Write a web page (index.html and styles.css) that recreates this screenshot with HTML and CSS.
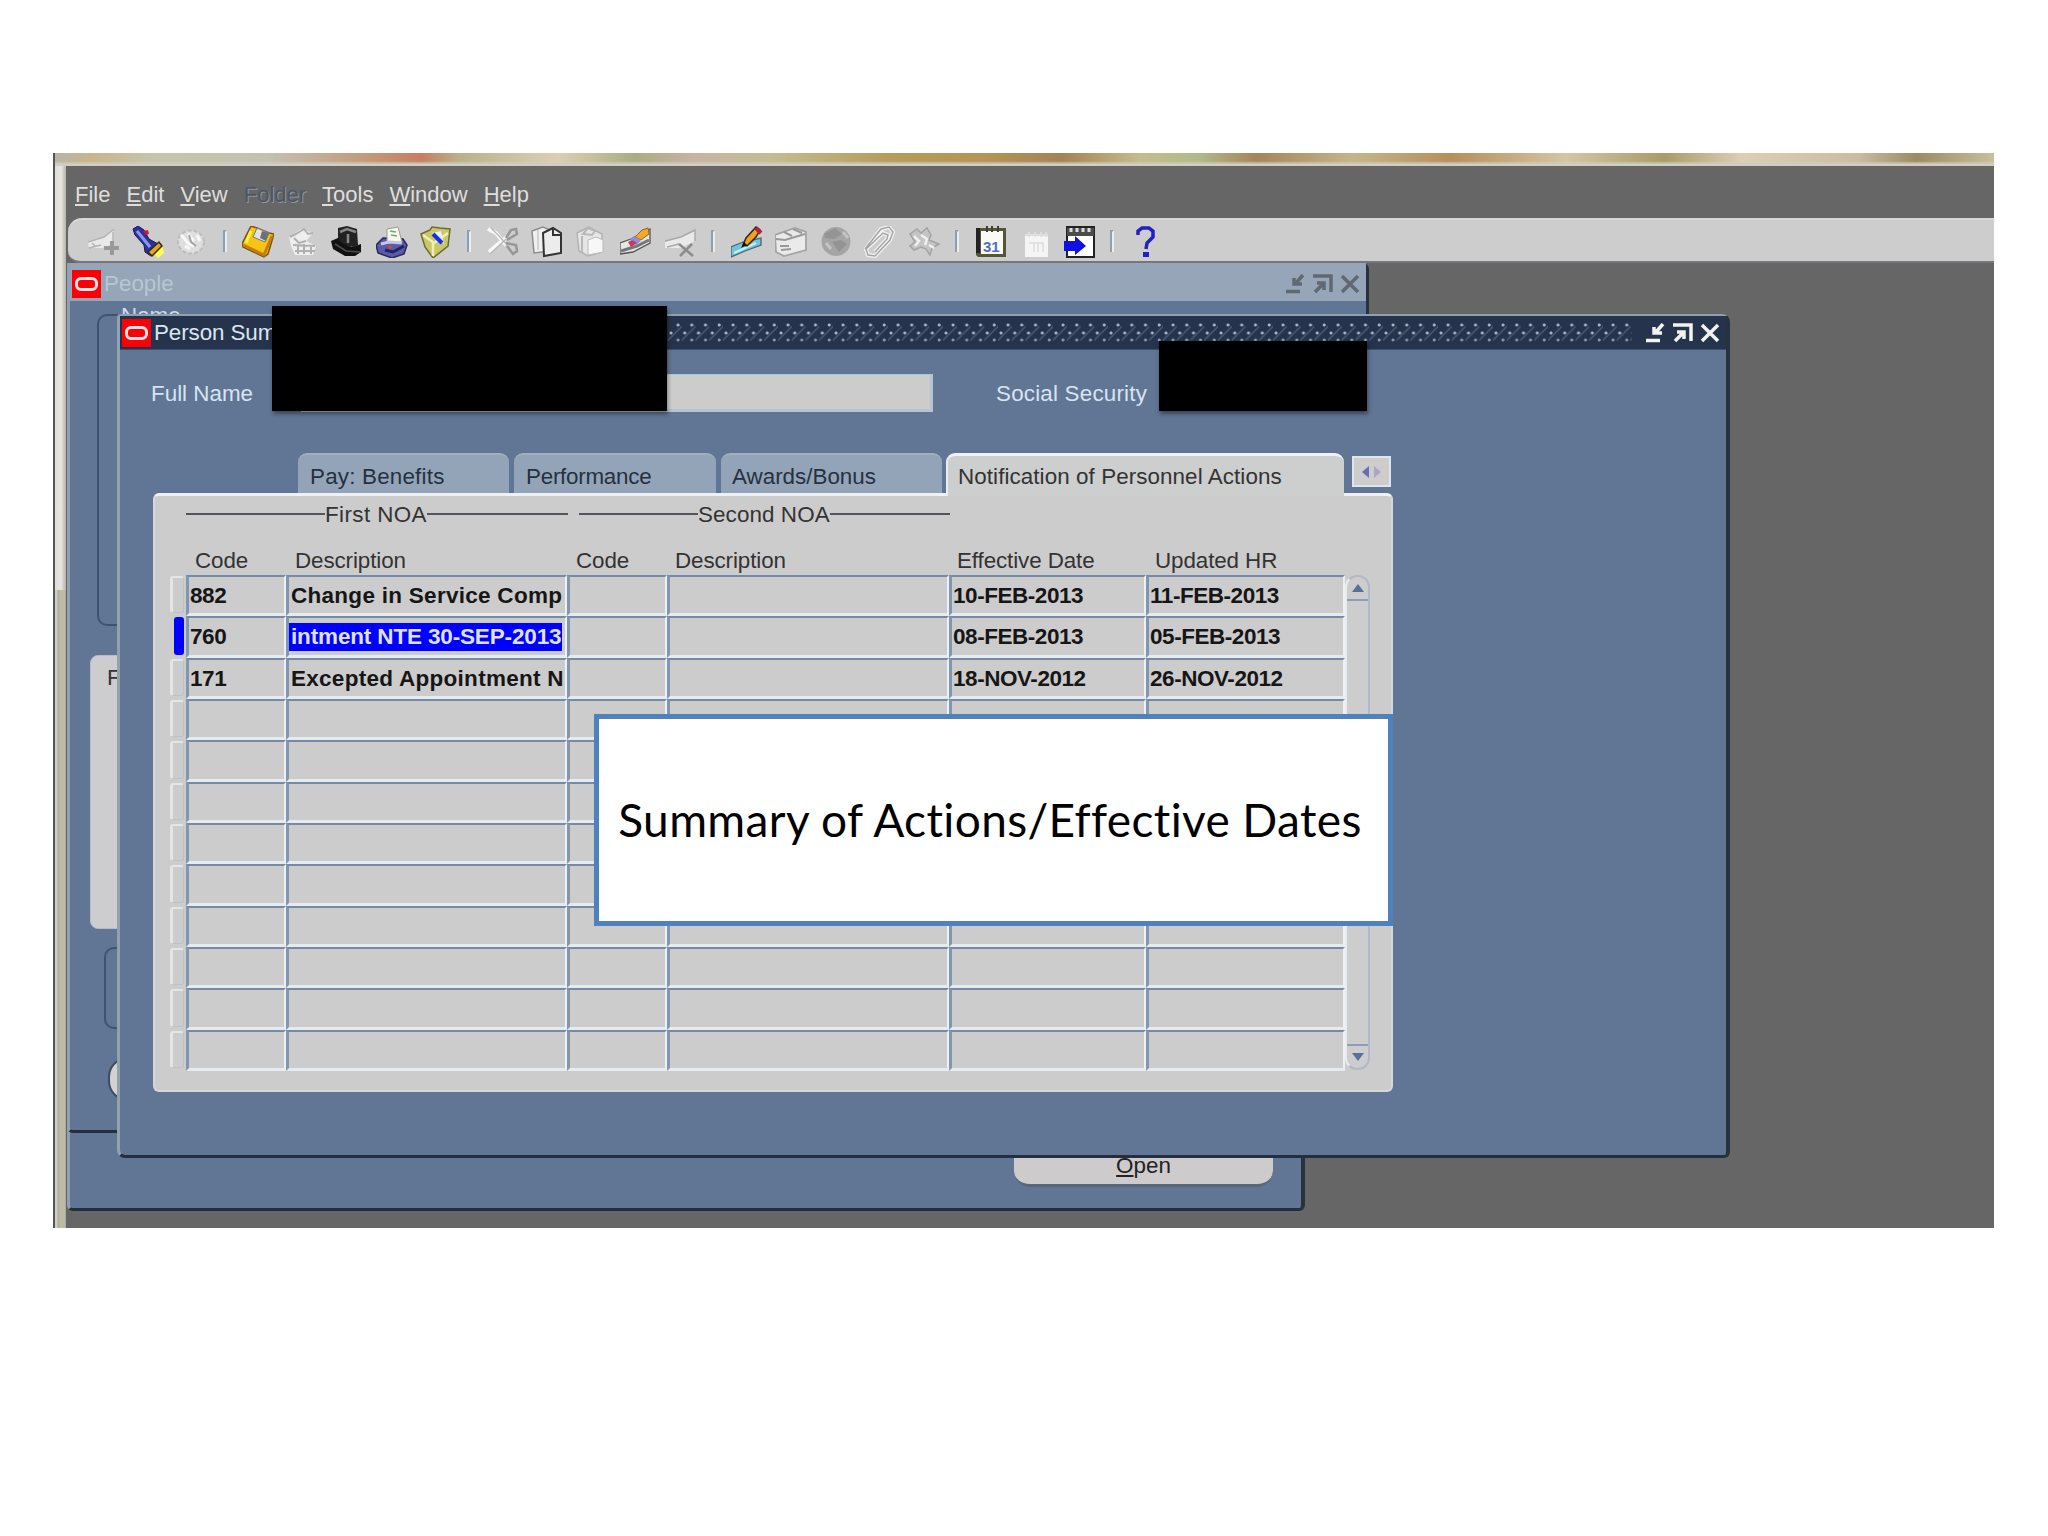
FILE: index.html
```html
<!DOCTYPE html>
<html lang="en">
<head>
    <meta charset="UTF-8">
    <meta name="viewport" content="width=device-width, initial-scale=1.0">
    <title>Person Summary</title>
    <link rel="stylesheet" href="styles.css">
</head>
<body>
    <div class="screen">
      <div class="app">
        <nav class="menubar">
          <span><u>F</u>ile</span>
          <span><u>E</u>dit</span>
          <span><u>V</u>iew</span>
          <span class="disabled">Folder</span>
          <span><u>T</u>ools</span>
          <span><u>W</u>indow</span>
          <span><u>H</u>elp</span>
        </nav>

        <div class="toolbar">
          <!-- new -->
          <svg viewBox="0 0 32 32"><path d="M1 16l5-2 10-3 9-6 2 1v12l-12 4H2z" fill="#e9e9e9"/><path d="M1 16l16-5 10-8M2 22l12-3M5 17l4 4M26 6v9" stroke="#b4b4b4" stroke-width="1.5" fill="none"/><path d="M17 22h15M25 15v14" stroke="#999" stroke-width="4"/></svg>
          <!-- find -->
          <svg viewBox="0 0 32 32"><path d="M21 27l9-8 2 8-6 5z" fill="#ffff55"/><path d="M1 3l5-3 6 4 5 9 9 5 2 4-9 8-6-4-1-7-9-10z" fill="#2c3299" stroke="#111a55"/><path d="M5 5l13 16" stroke="#8d95e8" stroke-width="3"/><path d="M16 26l11-10 3 4-10 10z" fill="#e8a31b" stroke="#2a2a22" stroke-width="1.5"/><path d="M11 5l5-1 1 4-3 1z" fill="#d4182c"/></svg>
          <!-- show navigator -->
          <svg viewBox="0 0 32 32"><ellipse cx="15" cy="16" rx="13" ry="11.500" fill="#dedede" stroke="#bcbcbc" stroke-width="2" stroke-dasharray="4 2"/><path d="M5 9l8 9 5 2M12 8l6 7M9 20l5 3M21 9l3 6" stroke="#f8f8f8" stroke-width="3" fill="none"/><path d="M13 9l2 7 5 4" stroke="#a4a4a4" stroke-width="2" fill="none"/></svg>
          <i class="sep"></i>
          <!-- save -->
          <svg viewBox="0 0 32 32"><path d="M9 0l6 2 12 5 5 1-6 20-4 3L1 21l-1-3z" fill="#f6c414" stroke="#6f5510" stroke-width="1.500"/><path d="M1 19l21 10 8-19" stroke="#c77c08" stroke-width="3" fill="none"/><path d="M15 2l12 5-4 9-12-5z" fill="#e2e2e2" stroke="#777"/><path d="M20 5l7 2-3 8-6-3z" fill="#69707e"/><path d="M9 5L4 17" stroke="#fff04c" stroke-width="3"/></svg>
          <!-- next step -->
          <svg viewBox="0 0 32 32"><path d="M2 11L14 3l12 4-7 8 10 5-3 9H8l-4-9z" fill="#eee"/><path d="M3 11l6-3 8-5 4 5 5-1M7 12l5 5 7-2M6 19l22 1M8 25h20M11 19v9M17 18v10M24 19v9" stroke="#b0b0b0" stroke-width="2" fill="none"/></svg>
          <!-- switch responsibility -->
          <svg viewBox="0 0 32 32"><path d="M7 2l9-2 10 3 1 16-5 2-11-3-4-5z" fill="#222"/><path d="M0 15l7-3 4 5 10 4 9-3v8l-6 4H14L2 23z" fill="#111"/><path d="M9 6l7-3 9 3M17 8v9" stroke="#888" stroke-width="2.500" fill="none"/><path d="M4 18l11 7 14 1" stroke="#4d4d4d" stroke-width="1.500" fill="none"/></svg>
          <!-- print -->
          <svg viewBox="0 0 32 32"><path d="M0 19l7-7 20 1 4 6-3 9-12 4L2 27z" fill="#5a5aa5" stroke="#28285c" stroke-width="1.500"/><path d="M11 3l11-2 4 15-15 1z" fill="#f6f6ef" stroke="#9b9b8c"/><path d="M5 18l8-2 13 1" stroke="#c4c4ee" stroke-width="3" fill="none"/><path d="M9 24l8 2 11-6" stroke="#222266" stroke-width="3" fill="none"/><circle cx="14" cy="21" r="1.800" fill="#d64545"/><path d="M14 5l6 1M15 9l6 1" stroke="#7aa56a" stroke-width="1.500"/></svg>
          <!-- close form -->
          <svg viewBox="0 0 32 32"><path d="M1 8l9-4 2-3 8 1 10 1-2 17-15 12L5 21z" fill="#c8c869" stroke="#6c6c2e" stroke-width="1.500"/><path d="M3 9l11 8 14-10M13 17v13" stroke="#efefb5" stroke-width="2.500" fill="none"/><path d="M12 7l9-2 3 13-8-6z" fill="#e8efff"/><path d="M13 8l9 9" stroke="#1c2ce0" stroke-width="4"/></svg>
          <i class="sep"></i>
          <!-- cut -->
          <svg viewBox="0 0 32 32"><path d="M1 3l8 4 10 12M2 26l8-7 10-8" stroke="#f7f7f7" stroke-width="4" fill="none"/><path d="M4 2l9 9 8 9M3 28l16-15" stroke="#b5b5b5" stroke-width="1.200" fill="none"/><path d="M19 12l5-8 5-1 1 5-10 6M19 17l10 2 1 6-4 3-6-8" stroke="#969696" stroke-width="2.500" fill="none"/></svg>
          <!-- copy -->
          <svg viewBox="0 0 32 32"><path d="M1 5l11-4 7 3v21L3 27z" fill="#f0f0f0" stroke="#8d8d8d" stroke-width="1.500"/><path d="M12 7l10-5 8 5v20l-17 3z" fill="#ececec" stroke="#333" stroke-width="2"/><path d="M22 3v6h7" stroke="#333" stroke-width="2" fill="none"/><path d="M7 4v20" stroke="#b5b5b5"/></svg>
          <!-- paste -->
          <svg viewBox="0 0 32 32"><path d="M1 7l8-4 4-2 7 4 6 3v18l-14 4-9-5z" fill="#e5e5e5" stroke="#b3b3b3" stroke-width="1.500"/><path d="M12 14l8-3 7 3v12l-15 3z" fill="#f7f7f7" stroke="#bbb"/><path d="M7 8l5-6 7 3-3 4zM6 10v16" stroke="#b8b8b8" stroke-width="2" fill="none"/></svg>
          <!-- clear record -->
          <svg viewBox="0 0 32 32"><path d="M0 17l11-4 19-10v14L13 26l-13 2z" fill="#e6e6e6" stroke="#555" stroke-width="1.300"/><path d="M1 25l16-5 12-6" stroke="#777" stroke-width="3" fill="none"/><path d="M15 11l7-7 6-2 1 6-8 6z" fill="#f0a928" stroke="#93621d"/><path d="M10 13l4-3 7 5-5 4z" fill="#8d8ddd"/><path d="M8 16l4-2 5 3-6 4z" fill="#c43c5c"/></svg>
          <!-- delete -->
          <svg viewBox="0 0 32 32"><path d="M0 16l14-4L30 5v10l-14 7H0z" fill="#e9e9e9"/><path d="M0 15l16-4 14-7v11M2 21l12-3" stroke="#aaa" stroke-width="1.500" fill="none"/><path d="M14 18l14 12M27 18L15 30" stroke="#8c8c8c" stroke-width="2.500"/></svg>
          <i class="sep"></i>
          <!-- edit field -->
          <svg viewBox="0 0 32 32"><path d="M0 21l12-5 18-4v7l-16 6-14 6z" fill="#72c5d8" stroke="#4b6670" stroke-width="1.300"/><path d="M3 27l22-10" stroke="#c7eff5" stroke-width="2"/><path d="M12 19l3-7L25 1l4 3-4 7-9 9z" fill="#f0a01c" stroke="#332615" stroke-width="1.500"/><path d="M25 2l5 5" stroke="#ad2339" stroke-width="4"/><path d="M10 22l3-6 3 3z" fill="#111"/></svg>
          <!-- zoom -->
          <svg viewBox="0 0 32 32"><path d="M0 9l20-7 11 4v18l-22 6-8-4z" fill="#eaeaea" stroke="#a4a4a4" stroke-width="1.800"/><path d="M1 13l9 1 20-6M9 6l8 4M18 3l9 4M5 20h9M6 24l10-1" stroke="#999" stroke-width="2" fill="none"/></svg>
          <!-- translations -->
          <svg viewBox="0 0 32 32"><circle cx="16" cy="15.500" r="14.500" fill="#a5a5a5"/><path d="M4 8L15 2l7 6-8 5-9-1zM12 16l9-2 6 4-8 8z" fill="#949494"/><path d="M23 6l5 6M6 17l5 6" stroke="#c3c3c3" stroke-width="3"/></svg>
          <!-- attachments -->
          <svg viewBox="0 0 32 32"><path d="M1 24L17 3l8-2 4 5-3 8-15 16-7-1-2-6L19 7l5 2-1 4-12 13" stroke="#f3f3f3" stroke-width="4" fill="none"/><path d="M1 23L17 3l8-2 4 5-3 8-15 16-7-1-2-6L19 7l5 2-1 4-12 13" stroke="#a4a4a4" stroke-width="1.500" fill="none"/></svg>
          <!-- folder tools -->
          <svg viewBox="0 0 32 32"><path d="M1 8l7-5 4 4 6-5 4 7-2 5 10 4-7 4-2 7-4-6-5-2-7 3-4-4 5-4z" fill="#c4c4c4" stroke="#a4a4a4" stroke-width="1.500"/><path d="M5 10l5 5-4 5M12 9l6 4-2 6M20 19l5 3" stroke="#f0f0f0" stroke-width="2.500" fill="none"/></svg>
          <i class="sep"></i>
          <!-- calendar -->
          <svg viewBox="0 0 32 32"><path d="M1 2h30v29H3l-2-2z" fill="#55553e"/><path d="M1 2h4v25H1z" fill="#222"/><path d="M6 5h22v23H6z" fill="#fbfbf6"/><path d="M12 0v6M17 0v6M23 0v6" stroke="#3e3e32" stroke-width="2"/><text x="8" y="26" class="cal-day">31</text></svg>
          <!-- open calendar -->
          <svg viewBox="0 0 32 32"><path d="M5 9h23v22H5z" fill="#f5f5f5"/><path d="M5 9h23M9 6v5M15 6v5M21 6v5M26 6v5" stroke="#dedede" stroke-width="2"/><path d="M9 17h14v9M14 17v9M18 17v9" stroke="#ddd" stroke-width="1.500" fill="none"/></svg>
          <!-- jump to date -->
          <svg viewBox="0 0 32 32"><path d="M3 1h27v30H3z" fill="#fff" stroke="#222" stroke-width="2"/><path d="M3 2h27v8H3z" fill="#4c4c4c"/><path d="M7 2v4M13 2v4M19 2v4M25 2v4" stroke="#ddd" stroke-width="3"/><path d="M0 15h11v-5l11 10-11 9v-4H0z" fill="#0f0fe6"/></svg>
          <i class="sep"></i>
          <!-- help -->
          <svg viewBox="0 0 32 32"><path d="M9 9V5l4-3h7l4 3v6l-6 6-1 6" stroke="#2020c4" stroke-width="3.500" fill="none"/><path d="M14 26h6v5h-6z" fill="#2020c4"/></svg>
        </div>

        <div class="desktop">
          <div class="window opener">
            <button class="btn"><u>O</u>pen</button>
          </div>

          <div class="window people">
            <div class="titlebar">
              <span class="logo"><i></i></span>
              <span class="title">People</span>
              <svg class="winctl" viewBox="0 0 74 20"><path d="M0 17.500h14M17 1l-7 8M8 4v6h8" /><path d="M27 2h18v16M29 18l8-8M31 9h7v7"/><path d="M56 2l16 16M72 2L56 18"/></svg>
            </div>
            <div class="people-body">
              <div class="box name-box"><span>Name</span></div>
              <div class="side-panel">F</div>
              <div class="box small-box"></div>
              <div class="round-btn"></div>
            </div>
          </div>

          <div class="window summary">
            <div class="titlebar">
              <span class="logo"><i></i></span>
              <span class="title">Person Sum</span>
              <span class="grip"></span>
              <svg class="winctl" viewBox="0 0 74 20"><path d="M0 17.500h14M17 1l-7 8M8 4v6h8" /><path d="M27 2h18v16M29 18l8-8M31 9h7v7"/><path d="M56 2l16 16M72 2L56 18"/></svg>
            </div>

            <div class="fields">
              <label class="name-label">Full Name</label>
              <span class="field"></span>
              <label class="ssn-label">Social Security</label>
            </div>

            <div class="tabs">
              <div class="tab tab-pay">Pay: Benefits</div>
              <div class="tab tab-perf">Performance</div>
              <div class="tab tab-awards">Awards/Bonus</div>
              <div class="tab active">Notification of Personnel Actions</div>
              <div class="tab-nav"><svg viewBox="0 0 20 12"><path d="M7 0v12L0 6z" fill="#6a6ab8"/><path d="M12 0v12l7-6z" fill="#a9a9c6"/></svg></div>
            </div>

            <div class="panel">
              <div class="groups">
                <div class="group first">First NOA</div>
                <div class="group second">Second NOA</div>
              </div>
              <div class="heads">
                <span>Code</span>
                <span>Description</span>
                <span>Code</span>
                <span>Description</span>
                <span>Effective Date</span>
                <span>Updated HR</span>
              </div>
              <div class="table">
                <div class="rows" id="rows"></div>
                <div class="scrollbar">
                  <span class="up"></span>
                  <span class="down"></span>
                </div>
              </div>
            </div>
          </div>
        </div>
      </div>
    </div>

    <div class="mask mask-name"></div>
    <div class="mask mask-ssn"></div>
    <div class="callout">Summary of Actions/Effective Dates</div>

    <script>
      const ROW_COUNT = 12;
      const CURRENT_ROW = 1;
      const actions = [
        ['882', 'Change in Service Comp', '', '', '10-FEB-2013', '11-FEB-2013'],
        ['760', 'intment NTE 30-SEP-2013', '', '', '08-FEB-2013', '05-FEB-2013'],
        ['171', 'Excepted Appointment N', '', '', '18-NOV-2012', '26-NOV-2012'],
      ];
      const columns = ['code', 'desc', 'code2', 'desc2', 'date', 'date'];

      const rows = document.getElementById('rows');
      for (let i = 0; i < ROW_COUNT; i++) {
        const row = document.createElement('div');
        row.className = i === CURRENT_ROW ? 'row current' : 'row';

        const marker = document.createElement('i');
        marker.className = 'marker';
        row.appendChild(marker);

        columns.forEach((name, c) => {
          const cell = document.createElement('div');
          cell.className = 'cell ' + name;
          const text = document.createElement('span');
          text.textContent = actions[i] ? actions[i][c] : '';
          cell.appendChild(text);
          row.appendChild(cell);
        });
        rows.appendChild(row);
      }
    </script>
</body>
</html>
```

FILE: styles.css
```css
* {
    box-sizing: border-box;
}
body {
    margin: 0;
    width: 2048px;
    height: 1536px;
    overflow: hidden;
    background: #fff;
    font-family: "Liberation Sans", Arial, sans-serif;
    font-size: 22.4px;
    line-height: 26px;
    color: #333;
    white-space: nowrap;
}
u {
    text-decoration: underline;
    text-decoration-thickness: 2px;
    text-underline-offset: 2px;
}

/* outer frame: what is left of the browser window around the application */
.screen {
    margin: 153px 0 0 53px;
    width: 1941px;
    height: 1075px;
    padding: 13px 0 0 13px;
    background:
        linear-gradient(90deg, #555 0 2px, transparent 2px) 0 0 / 13px 100% no-repeat,
        linear-gradient(180deg, transparent 8px, #cfcdc4 11px) 0 0 / 100% 13px no-repeat,
        linear-gradient(90deg, #b5b5a5 0, #c9b58c 2%, #c6c4a8 5%, #c3c2b0 11%, #c39b7b 16%, #c97d62 19%, #b9b38c 21%, #dccfb1 26%, #a9ad83 30%, #c9b3a1 33%, #c3bd92 37%, #b69c5b 43%, #b79355 48%, #a58255 52%, #c3bd8b 56%, #b1ba8a 59%, #a7845b 62%, #c5b58b 67%, #b78e5a 72%, #d4c6a4 78%, #a99b68 83%, #dccfb4 87%, #c9bca0 93%, #9c8a62 96%, #c8c09c 100%) 0 0 / 100% 13px no-repeat,
        linear-gradient(90deg, #555 0 2px, #cfcfc8 2px 4px, #aaa798 5px, #bdbba6 7px 12px, #999) 0 437px / 13px 100% no-repeat,
        linear-gradient(90deg, #555 0 2px, #deded9 2px, #e8e6e0 8px, #b4b3ac 13px) 0 0 / 13px 437px no-repeat;
}
.app {
    display: flex;
    flex-direction: column;
    height: 1062px;
    background: #666;
}

.menubar {
    display: flex;
    gap: 16px;
    height: 52px;
    padding: 16px 0 0 9px;
    font-size: 22px;
    line-height: 26px;
    color: #dedede;
}
.menubar .disabled {
    color: #4d5665;
    text-shadow: 1px 1px 0 #8f959e;
}

.toolbar {
    display: flex;
    align-items: center;
    height: 45px;
    padding-left: 13px;
    margin-left: 2px;
    background: #cdcdcd;
    border-top: 2px solid #d8d8d8;
    border-bottom: 2px solid #76767d;
    border-radius: 14px 0 0 12px;
}
.toolbar svg {
    width: 32px;
    height: 32px;
    margin: 3px 6.25px 0;
    flex: none;
}
.toolbar svg:last-child {
    margin-left: 5px;
}
.sep {
    width: 4px;
    height: 22px;
    margin: 0 9.7px 0 8px;
    border: 2px solid #8ba0b5;
    border-right-color: #e9edf0;
    border-bottom: 0;
}
.cal-day {
    font: bold 15px "Liberation Sans", Arial, sans-serif;
    fill: #4d6fc4;
}

.desktop {
    position: relative;
    flex: 1;
    overflow: hidden;
}
.window {
    position: absolute;
    background: #617594;
    border-left: 3px solid #92a1b2;
    border-right: 4px solid #26333f;
    border-bottom: 3px solid #232f3e;
    border-radius: 6px;
}
.opener {
    left: 1px;
    top: 400px;
    width: 1238px;
    height: 548px;
    display: flex;
    align-items: flex-end;
    justify-content: flex-end;
    padding: 0 28px 21px 0;
}
.btn {
    width: 259px;
    height: 52px;
    padding: 12px 0 0;
    border: 0;
    border-bottom: 3px solid #56677e;
    border-radius: 16px;
    background: #cecbcd;
    font: inherit;
    color: #222;
}

.titlebar {
    display: flex;
    align-items: center;
    height: 36px;
    padding-left: 2px;
}
.logo {
    display: flex;
    align-items: center;
    justify-content: center;
    width: 29px;
    height: 28px;
    background: #fb0007;
    flex: none;
}
.logo i {
    width: 23px;
    height: 14px;
    border: 3px solid #ffe4e4;
    border-radius: 6px;
}
.title {
    margin-left: 3px;
}
.winctl {
    width: 74px;
    height: 20px;
    margin-left: auto;
    flex: none;
    fill: none;
    stroke: currentColor;
    stroke-width: 3.5;
}

.people {
    left: 1px;
    top: 0;
    width: 1302px;
    height: 870px;
    border-right-width: 3px;
    border-radius: 0 6px 6px 6px;
}
.people .titlebar {
    height: 38px;
    padding-top: 3px;
    padding-left: 2px;
    background: #96a5b7;
    color: #b9c6d3;
}
.people .winctl {
    color: #5f6873;
    margin-right: 6px;
}
.people-body {
    display: flex;
    flex-direction: column;
    align-items: flex-start;
}
.box {
    border: 2px solid #3e5371;
    border-radius: 10px;
}
.name-box {
    width: 300px;
    height: 312px;
    margin: 13px 0 0 27px;
}
.name-box span {
    display: block;
    width: 66px;
    margin: -13px 0 0 19px;
    padding-left: 3px;
    background: #617594;
    color: #cfdcea;
}
.side-panel {
    width: 200px;
    height: 274px;
    margin: 29px 0 0 20px;
    padding: 9px 0 0 16px;
    background: #cdcdcf;
    border: 1px solid #b2bccb;
    border-radius: 8px;
}
.small-box {
    width: 100px;
    height: 82px;
    margin: 18px 0 0 34px;
}
.round-btn {
    width: 100px;
    height: 44px;
    margin: 28px 0 0 38px;
    background: #d2d2cf;
    border: 2px solid #3d4d61;
    border-radius: 20px;
}

.summary {
    left: 51px;
    top: 51px;
    width: 1613px;
    height: 844px;
    border-top: 2px solid #8fa0ae;
    border-radius: 4px 8px 6px 8px;
}
.summary .titlebar {
    height: 34px;
    padding-left: 2px;
    background: #25344c;
    border-bottom: 1px solid #3c5070;
    color: #dbe6f0;
}
.summary .grip {
    width: 964px;
    height: 22px;
    margin-left: 394px;
    background:
        radial-gradient(circle at 10px 3px, #a8b8c8 0 1.1px, transparent 1.9px),
        radial-gradient(circle at 3px 11px, #a8b8c8 0 1.1px, transparent 1.9px),
        radial-gradient(circle at 10px 18px, #8698ab 0 1.1px, transparent 1.9px),
        linear-gradient(135deg, transparent 46%, #42556e 49% 53%, transparent 56%);
    background-size: 13.75px 22px;
}
.summary .title {
    width: 121px;
    margin: 1px -1px 0 3px;
    letter-spacing: -0.1px;
}
.summary .winctl {
    color: #f2f2ee;
    margin-right: 6px;
}

.fields {
    display: flex;
    align-items: center;
    height: 42px;
    margin: 22px 0 0 31px;
    color: #d7e4f2;
}
.name-label {
    width: 150px;
    padding-top: 2px;
}
.field {
    width: 632px;
    height: 38px;
    background: #cbcccb;
    border: solid #b6c3d2;
    border-width: 1px 3px 3px 1px;
}
.ssn-label {
    margin-left: 63px;
    padding-top: 2px;
    letter-spacing: 0.2px;
}

.tabs {
    position: relative;
    z-index: 1;
    display: flex;
    align-items: flex-end;
    height: 40px;
    margin: 39px 0 0 178px;
}
.tab {
    height: 40px;
    padding: 9px 0 0 12px;
    margin-right: 5px;
    background: #94a4b8;
    border-top: 2px solid #a1b0c1;
    border-radius: 9px 9px 0 0;
    color: #26313f;
}
.tab-pay { width: 211px; letter-spacing: 0.2px; }
.tab-perf { width: 202px; letter-spacing: -0.25px; }
.tab-awards { width: 221px; padding-left: 11px; }
.tab.active {
    width: 398px;
    height: 43px;
    margin: 0 8px -3px -1px;
    background: #cdcece;
    border-top: 3px solid #eef1f5;
    border-left: 2px solid #e8edf2;
    padding: 8px 0 0 10px;
    color: #333;
    letter-spacing: 0.08px;
}
.tab-nav {
    display: flex;
    align-items: center;
    justify-content: center;
    width: 39px;
    height: 31px;
    margin-bottom: 6px;
    background: #cfcdcb;
    border: 2px solid #dfe5ec;
}
.tab-nav svg {
    width: 20px;
    height: 12px;
}

.panel {
    width: 1240px;
    height: 599px;
    margin-left: 33px;
    padding-left: 15px;
    background: #cdcccd;
    border: 2px solid #d3d8de;
    border-top: 3px solid #edf0f4;
    border-radius: 6px;
}
.groups {
    display: flex;
    gap: 11px;
    height: 36px;
    padding: 6px 0 0 16px;
}
.group {
    display: flex;
    height: 26px;
    align-items: center;
}
.group::before, .group::after {
    content: "";
    height: 2px;
    margin-bottom: 2px;
    background: #55555d;
    flex: 1;
}
.first { width: 382px; letter-spacing: 0.4px; }
.first::before { flex: none; width: 139px; }
.second { width: 371px; letter-spacing: 0.1px; }
.second::before { flex: none; width: 119px; }
.heads {
    display: grid;
    grid-template-columns: 100px 281px 99px 282px 198px 198px;
    height: 43px;
    padding: 16px 0 0 25px;
    letter-spacing: -0.1px;
}
.table {
    display: flex;
}
.rows {
    width: 1175px;
}
.row {
    display: grid;
    grid-template-columns: 16px 100px 281px 100px 282px 197px 199px;
    height: 41.35px;
}
.marker {
    width: 14px;
    margin: 1px 0 3px;
    border: 1px solid #bcc3c8;
    border-left: 3px solid #e5e6e3;
    border-top: 2px solid #e5e6e3;
    border-radius: 3px;
}
.current .marker {
    width: 10px;
    margin-left: 4px;
    background: #0000fe;
    border: 0;
}
.cell {
    overflow: hidden;
    padding: 5px 3px 0 1px;
    border-top: 2px solid #768aa5;
    border-left: 3px solid #8196b0;
    border-bottom: 3px solid #e6ebef;
    border-right: 2px solid #eef0f1;
    font-size: 22.5px;
    font-weight: bold;
    color: #161616;
}
.cell span {
    display: block;
    height: 28px;
    line-height: 28px;
}
.code { letter-spacing: -0.4px; }
.desc {
    letter-spacing: 0.28px;
    padding-left: 2px;
}
.date { letter-spacing: -0.45px; }
.current .desc {
    letter-spacing: -0.15px;
    padding-left: 0;
}
.current .desc span {
    padding-left: 2px;
    background: #0000fe;
    color: #dfe2ff;
}
.scrollbar {
    display: flex;
    flex-direction: column;
    justify-content: space-between;
    width: 25px;
    height: 495px;
    border: 2px solid #b0b9ca;
    border-left-color: #e8edf1;
    border-radius: 12px;
    background: #cdcdce;
}
.scrollbar span {
    display: flex;
    align-items: center;
    justify-content: center;
    height: 24px;
}
.scrollbar .up { border-bottom: 2px solid #8f9eb4; }
.scrollbar .down { border-top: 2px solid #8f9eb4; }
.scrollbar span::after {
    content: "";
    border: 6px solid transparent;
}
.scrollbar .up::after {
    border-bottom: 8px solid #596f9c;
    border-top: 0;
}
.scrollbar .down::after {
    border-top: 8px solid #596f9c;
    border-bottom: 0;
}

/* slide annotations drawn over the application */
.mask {
    position: absolute;
    background: #000;
    box-shadow: 1px 3px 4px rgba(0, 0, 0, 0.4);
}
.mask-name {
    left: 272px;
    top: 306px;
    width: 395px;
    height: 105px;
}
.mask-ssn {
    left: 1159px;
    top: 341px;
    width: 208px;
    height: 70px;
}
.callout {
    position: absolute;
    left: 594px;
    top: 714px;
    width: 799px;
    height: 212px;
    display: flex;
    align-items: center;
    justify-content: center;
    padding-right: 7px;
    background: #fff;
    border: 5px solid #4f81bd;
    font-family: Lato, sans-serif;
    font-size: 46px;
    line-height: 56px;
    color: #000;
    letter-spacing: 0.37px;
    font-variant-ligatures: none;
}
```
